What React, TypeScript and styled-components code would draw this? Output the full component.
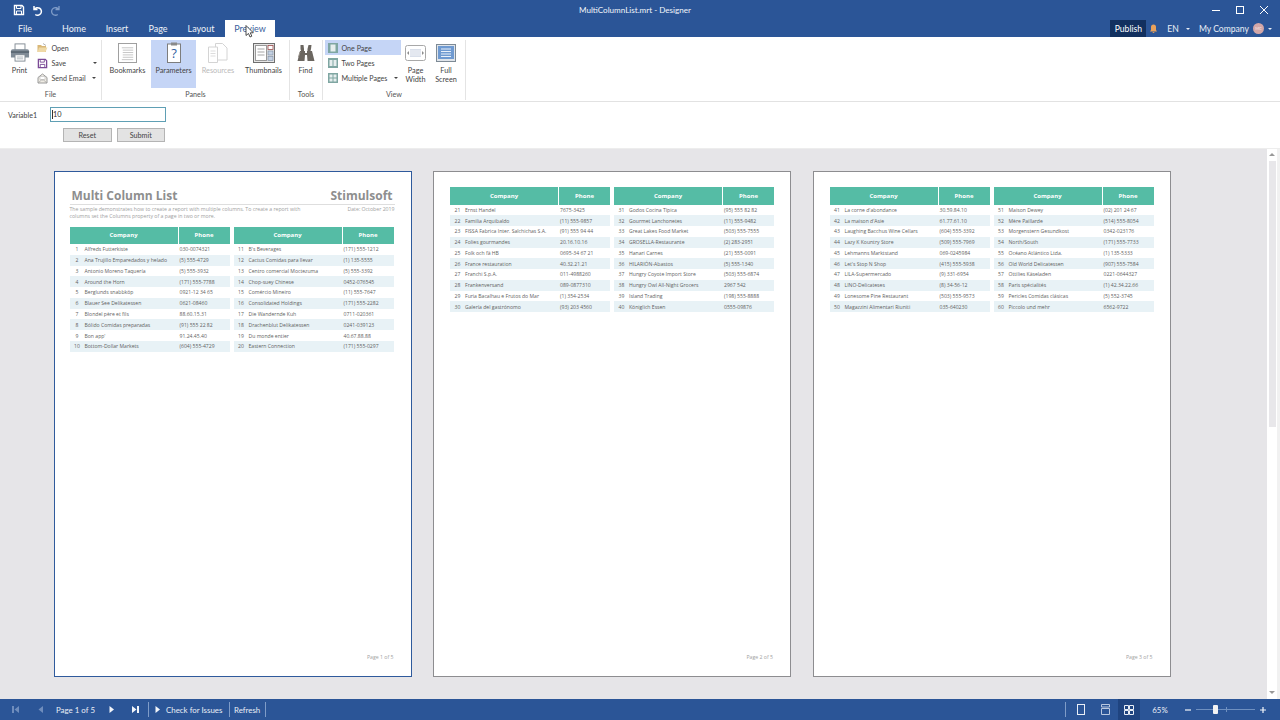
import React from 'react';
import styled, { createGlobalStyle } from 'styled-components';

const GlobalStyle = createGlobalStyle`
  html, body {
    margin: 0;
    padding: 0;
    background: #fff;
  }
  * {
    box-sizing: border-box;
  }
  svg {
    flex: none;
  }
`;

const BLUE = '#2b5597';
const UI_FONT = 'Lato, "Open Sans", sans-serif';
const REPORT_FONT = '"Open Sans", "Noto Sans", sans-serif';

const Window = styled.div`
  width: 1280px;
  height: 720px;
  display: flex;
  flex-direction: column;
  overflow: hidden;
  font-family: ${UI_FONT};
  font-size: 7.2px;
  color: #444;
`;

const TitleBar = styled.header`
  height: 37px;
  background: ${BLUE};
  color: #fff;
  display: flex;
  flex-direction: column;
  flex: none;
`;

const TitleRow = styled.div`
  height: 20px;
  display: flex;
  align-items: center;
  padding-left: 13px;
  position: relative;
`;

const QuickIcon = styled.span`
  width: 12px;
  height: 12px;
  margin-right: 6px;
  display: flex;
  align-items: center;
  justify-content: center;
`;

const DocTitle = styled.div`
  margin-left: 511px;
  width: 114px;
  font-size: 8.1px;
  white-space: nowrap;
  text-align: center;
  color: #f2f5fa;
`;

const WindowButtons = styled.div`
  margin-left: auto;
  display: flex;
  padding-right: 4px;
`;

const WindowButton = styled.span`
  width: 24px;
  height: 20px;
  display: flex;
  align-items: center;
  justify-content: center;
`;

const TabRow = styled.div`
  height: 17px;
  display: flex;
  align-items: stretch;
  padding-left: 8px;
`;

const Tab = styled.div<{ $active?: boolean; $width: number; $left?: number }>`
  position: relative;
  width: ${(p) => p.$width}px;
  margin-left: ${(p) => p.$left ?? 0}px;
  display: flex;
  align-items: center;
  justify-content: center;
  font-size: 9px;
  background: ${(p) => (p.$active ? '#fff' : 'transparent')};
  color: ${(p) => (p.$active ? '#3b5f9c' : '#eef2f8')};
`;

const Cursor = styled.svg`
  position: absolute;
  left: 20px;
  top: 5px;
`;

const AccountArea = styled.div`
  margin-left: auto;
  display: flex;
  align-items: center;
  padding-right: 8px;
`;

const PublishButton = styled.div`
  width: 36px;
  height: 17px;
  margin-right: 3px;
  background: #12305f;
  display: flex;
  align-items: center;
  justify-content: center;
  font-size: 8.6px;
`;

const AccountText = styled.span<{ $left?: number }>`
  margin-left: ${(p) => p.$left ?? 0}px;
  font-size: 8.6px;
  white-space: nowrap;
  color: #e9eef6;
`;

const Avatar = styled.span`
  width: 11px;
  height: 11px;
  margin-left: 4px;
  border-radius: 50%;
  background: #d3a7a8;
  color: #f4e8e8;
  font-size: 4px;
  display: flex;
  align-items: center;
  justify-content: center;
`;

const Caret = styled.span<{ $color?: string; $left?: number }>`
  display: inline-block;
  margin-left: ${(p) => p.$left ?? 5}px;
  border-left: 2px solid transparent;
  border-right: 2px solid transparent;
  border-top: 2px solid ${(p) => p.$color ?? '#444'};
`;

const Ribbon = styled.section`
  height: 65px;
  flex: none;
  display: flex;
  background: #fff;
  border-bottom: 1px solid #e2e2e2;
`;

const RibbonGroup = styled.div<{ $width: number }>`
  width: ${(p) => p.$width}px;
  flex: none;
  display: flex;
  flex-direction: column;
  border-right: 1px solid #e4e4e4;
  margin: 3px 0 1px;
`;

const GroupBody = styled.div<{ $left?: number }>`
  height: 48px;
  flex: none;
  padding-left: ${(p) => p.$left ?? 0}px;
  display: flex;
`;

const GroupLabel = styled.div`
  flex: 1;
  display: flex;
  align-items: center;
  justify-content: center;
  font-size: 7.2px;
  color: #555;
`;

const LargeButton = styled.div<{ $width: number; $active?: boolean; $off?: boolean }>`
  width: ${(p) => p.$width}px;
  flex: none;
  padding-top: 2px;
  display: flex;
  flex-direction: column;
  align-items: center;
  background: ${(p) => (p.$active ? '#c5d5f6' : 'transparent')};
  color: ${(p) => (p.$off ? '#b9b9b9' : '#444')};
`;

const LargeIcon = styled.span`
  height: 21px;
  margin-bottom: 1px;
  display: flex;
  align-items: center;
  justify-content: center;
`;

const LargeLabel = styled.span`
  font-size: 7.3px;
  line-height: 9px;
  text-align: center;
  margin-top: 2px;
`;

const SmallColumn = styled.div<{ $width: number; $left?: number }>`
  width: ${(p) => p.$width}px;
  margin-left: ${(p) => p.$left ?? 0}px;
  flex: none;
  display: flex;
  flex-direction: column;
`;

const SmallButton = styled.div<{ $active?: boolean }>`
  height: 15px;
  padding: 1px 0 0 3px;
  display: flex;
  align-items: center;
  gap: 3.5px;
  white-space: nowrap;
  font-size: 7.1px;
  background: ${(p) => (p.$active ? '#c5d5f6' : 'transparent')};
`;

const ParamPanel = styled.section`
  height: 47px;
  flex: none;
  background: #fff;
  padding: 5px 0 0 8px;
  display: flex;
  flex-direction: column;
  border-bottom: 1px solid #ededed;
`;

const ParamRow = styled.div`
  display: flex;
  align-items: center;
`;

const ParamLabel = styled.label`
  width: 42px;
  padding-top: 1px;
  font-size: 7.1px;
  color: #444;
`;

const ParamInput = styled.div`
  width: 116px;
  height: 15px;
  border: 1px solid #5f9fb4;
  padding-left: 1px;
  display: flex;
  align-items: center;
  font-size: 7.4px;
  color: #333;
`;

const InputCaret = styled.span`
  width: 1px;
  height: 9px;
  background: #333;
`;

const ParamButtons = styled.div`
  display: flex;
  gap: 5px;
  margin: 6px 0 0 55px;
`;

const ParamButton = styled.div`
  width: 48.5px;
  height: 14px;
  background: #e3e3e3;
  border: 1px solid #b4b4b4;
  display: flex;
  align-items: center;
  justify-content: center;
  font-size: 7.2px;
  color: #444;
`;

const Viewer = styled.main`
  flex: 1;
  min-height: 0;
  display: flex;
  background: #e6e5e8;
`;

const PageArea = styled.div`
  flex: 1;
  padding: 22px 0 0 53.5px;
  display: flex;
  gap: 21.5px;
  align-items: flex-start;
`;

const ScrollBar = styled.div`
  width: 13px;
  flex: none;
  background: #fff;
  border-right: 3px solid #f1f1f1;
  padding: 4px 2px 5px;
  display: flex;
  flex-direction: column;
  align-items: center;
`;

const ScrollArrow = styled.span<{ $down?: boolean }>`
  border-left: 3px solid transparent;
  border-right: 3px solid transparent;
  border-bottom: ${(p) => (p.$down ? '0' : '3px solid #999')};
  border-top: ${(p) => (p.$down ? '3px solid #999' : '0')};
  margin-top: ${(p) => (p.$down ? 'auto' : '0')};
`;

const ScrollThumb = styled.span`
  width: 7px;
  height: 266px;
  margin-top: 5px;
  background: #e8e7ea;
`;

const Page = styled.article<{ $current?: boolean }>`
  width: 358px;
  height: 506px;
  flex: none;
  background: #fff;
  border: ${(p) => (p.$current ? `1.5px solid #2f5a9c` : '1px solid #8d8d90')};
  padding: ${(p) => (p.$current ? '15px 16px 15px 15px' : '15px 16px 15px 16px')};
  font-family: ${REPORT_FONT};
  display: flex;
  flex-direction: column;
`;

const ReportHead = styled.div`
  height: 39.5px;
  display: flex;
  flex-direction: column;
  color: #9a9a9a;
`;

const ReportTitleRow = styled.div`
  display: flex;
  justify-content: space-between;
  align-items: center;
  padding: 0 2px 0 2px;
  height: 18px;
  font-size: 12px;
  font-weight: 700;
  color: #8e8e8e;
  border-bottom: 1.5px solid #dedede;
`;

const ReportInfo = styled.div`
  display: flex;
  justify-content: space-between;
  font-size: 5.2px;
  line-height: 7px;
  padding-top: 1px;
  color: #a0a0a0;
`;

const ReportInfoText = styled.div`
  white-space: nowrap;
`;

const Columns = styled.div`
  display: flex;
  gap: 4px;
`;

const Table = styled.div`
  width: 160px;
`;

const HeadRow = styled.div`
  height: 17.5px;
  display: grid;
  grid-template-columns: 108px 51px;
  gap: 1px;
`;

const HeadCell = styled.div`
  background: #55bca5;
  color: #fff;
  font-size: 6px;
  font-weight: 700;
  display: flex;
  align-items: center;
  justify-content: center;
`;

const Row = styled.div<{ $striped: boolean }>`
  height: 10.78px;
  display: grid;
  grid-template-columns: 15px 95px 50px;
  align-items: center;
  font-size: 5.1px;
  color: #5f5f5f;
  white-space: nowrap;
  background: ${(p) => (p.$striped ? '#e8f2f6' : '#fff')};
`;

const RowNumber = styled.span`
  text-align: center;
`;

const PageFooter = styled.div`
  margin-top: auto;
  padding-right: 1px;
  text-align: right;
  font-size: 5.2px;
  color: #a2a2a2;
`;

const StatusBar = styled.footer`
  height: 21px;
  flex: none;
  background: ${BLUE};
  color: #e9eef6;
  display: flex;
  align-items: center;
  font-size: 7.9px;
`;

const StatusIcon = styled.span<{ $width: number; $active?: boolean; $left?: number; $right?: number }>`
  width: ${(p) => p.$width}px;
  height: 21px;
  margin-left: ${(p) => p.$left ?? 0}px;
  margin-right: ${(p) => p.$right ?? 0}px;
  flex: none;
  display: flex;
  align-items: center;
  justify-content: center;
  background: ${(p) => (p.$active ? '#1f4480' : 'transparent')};
`;

const StatusText = styled.span<{ $width: number; $left?: number; $center?: boolean }>`
  width: ${(p) => p.$width}px;
  margin-left: ${(p) => p.$left ?? 0}px;
  text-align: ${(p) => (p.$center ? 'center' : 'left')};
  flex: none;
  white-space: nowrap;
`;

const StatusDivider = styled.span<{ $left: number; $right: number }>`
  width: 1px;
  height: 15px;
  flex: none;
  margin: 0 ${(p) => p.$right}px 0 ${(p) => p.$left}px;
  background: #7f9cc8;
`;

const StatusRight = styled.div`
  margin-left: auto;
  display: flex;
  align-items: center;
  height: 21px;
`;

const Slider = styled.div`
  position: relative;
  width: 59px;
  height: 1px;
  margin: 0 5px;
  background: #6f90c0;
`;

const SliderThumb = styled.span`
  position: absolute;
  left: 16.5px;
  top: -4px;
  width: 5px;
  height: 9px;
  border-radius: 1px;
  background: #f3f3f3;
`;

const SliderTick = styled.span`
  position: absolute;
  left: 30px;
  top: -2px;
  width: 1px;
  height: 5px;
  background: #6f90c0;
`;

type Company = [string, string];

const page1Left: Company[] = [
  ['Alfreds Futterkiste', '030-0074321'],
  ['Ana Trujillo Emparedados y helado', '(5) 555-4729'],
  ['Antonio Moreno Taquería', '(5) 555-3932'],
  ['Around the Horn', '(171) 555-7788'],
  ['Berglunds snabbköp', '0921-12 34 65'],
  ['Blauer See Delikatessen', '0621-08460'],
  ['Blondel père et fils', '88.60.15.31'],
  ['Bólido Comidas preparadas', '(91) 555 22 82'],
  ["Bon app'", '91.24.45.40'],
  ['Bottom-Dollar Markets', '(604) 555-4729'],
];

const page1Right: Company[] = [
  ["B's Beverages", '(171) 555-1212'],
  ['Cactus Comidas para llevar', '(1) 135-5555'],
  ['Centro comercial Moctezuma', '(5) 555-3392'],
  ['Chop-suey Chinese', '0452-076545'],
  ['Comércio Mineiro', '(11) 555-7647'],
  ['Consolidated Holdings', '(171) 555-2282'],
  ['Die Wandernde Kuh', '0711-020361'],
  ['Drachenblut Delikatessen', '0241-039123'],
  ['Du monde entier', '40.67.88.88'],
  ['Eastern Connection', '(171) 555-0297'],
];

const page2Left: Company[] = [
  ['Ernst Handel', '7675-3425'],
  ['Familia Arquibaldo', '(11) 555-9857'],
  ['FISSA Fabrica Inter. Salchichas S.A.', '(91) 555 94 44'],
  ['Folies gourmandes', '20.16.10.16'],
  ['Folk och fä HB', '0695-34 67 21'],
  ['France restauration', '40.32.21.21'],
  ['Franchi S.p.A.', '011-4988260'],
  ['Frankenversand', '089-0877310'],
  ['Furia Bacalhau e Frutos do Mar', '(1) 354-2534'],
  ['Galería del gastrónomo', '(93) 203 4560'],
];

const page2Right: Company[] = [
  ['Godos Cocina Típica', '(95) 555 82 82'],
  ['Gourmet Lanchonetes', '(11) 555-9482'],
  ['Great Lakes Food Market', '(503) 555-7555'],
  ['GROSELLA-Restaurante', '(2) 283-2951'],
  ['Hanari Carnes', '(21) 555-0091'],
  ['HILARIÓN-Abastos', '(5) 555-1340'],
  ['Hungry Coyote Import Store', '(503) 555-6874'],
  ['Hungry Owl All-Night Grocers', '2967 542'],
  ['Island Trading', '(198) 555-8888'],
  ['Königlich Essen', '0555-09876'],
];

const page3Left: Company[] = [
  ["La corne d'abondance", '30.59.84.10'],
  ["La maison d'Asie", '61.77.61.10'],
  ['Laughing Bacchus Wine Cellars', '(604) 555-3392'],
  ['Lazy K Kountry Store', '(509) 555-7969'],
  ['Lehmanns Marktstand', '069-0245984'],
  ["Let's Stop N Shop", '(415) 555-5938'],
  ['LILA-Supermercado', '(9) 331-6954'],
  ['LINO-Delicateses', '(8) 34-56-12'],
  ['Lonesome Pine Restaurant', '(503) 555-9573'],
  ['Magazzini Alimentari Riuniti', '035-640230'],
];

const page3Right: Company[] = [
  ['Maison Dewey', '(02) 201 24 67'],
  ['Mère Paillarde', '(514) 555-8054'],
  ['Morgenstern Gesundkost', '0342-023176'],
  ['North/South', '(171) 555-7733'],
  ['Océano Atlántico Ltda.', '(1) 135-5333'],
  ['Old World Delicatessen', '(907) 555-7584'],
  ['Ottilies Käseladen', '0221-0644327'],
  ['Paris spécialités', '(1) 42.34.22.66'],
  ['Pericles Comidas clásicas', '(5) 552-3745'],
  ['Piccolo und mehr', '6562-9722'],
];

const ReportTable = ({ first, rows }: { first: number; rows: Company[] }) => (
  <Table>
    <HeadRow>
      <HeadCell>Company</HeadCell>
      <HeadCell>Phone</HeadCell>
    </HeadRow>
    {rows.map(([name, phone], i) => (
      <Row key={name} $striped={i % 2 === 1}>
        <RowNumber>{first + i}</RowNumber>
        <span>{name}</span>
        <span>{phone}</span>
      </Row>
    ))}
  </Table>
);

const SaveIcon = ({ color = '#fff', size = 12 }: { color?: string; size?: number }) => (
  <svg width={size} height={size} viewBox="0 0 12 12" fill="none">
    <path d="M1.5 1.5h7.5l1.5 1.5v7.5h-9z" stroke={color} strokeWidth="1.4" />
    <path d="M3.5 1.5v3h4.5v-3M3.5 10.5v-3.5h5v3.5" stroke={color} strokeWidth="1" />
  </svg>
);

const PrintIcon = () => (
  <svg width="20" height="19" viewBox="0 0 22 21">
    <rect x="5.5" y="1" width="11" height="7" fill="#fff" stroke="#7d8790" />
    <path d="M1 9a2 2 0 0 1 2-2h16a2 2 0 0 1 2 2v7h-20z" fill="#7f8b96" />
    <rect x="1" y="9" width="20" height="2" fill="#5b6873" />
    <rect x="5.5" y="13" width="11" height="7" fill="#fff" stroke="#7d8790" />
    <path d="M7.5 15.5h7M7.5 17.5h7" stroke="#aab2b8" />
  </svg>
);

const OpenIcon = () => (
  <svg width="11" height="10" viewBox="0 0 11 10">
    <path d="M0.5 2h3.5l1 1h4v6h-8.500z" fill="#d9b777" />
    <path d="M2 4.500h8.500l-2 4.500h-8z" fill="#efd9a6" />
    <path d="M6 .5l3 2" stroke="#b5b5b5" />
  </svg>
);

const SendIcon = () => (
  <svg width="11" height="11" viewBox="0 0 11 11">
    <path d="M1 4.500l4.500-3.500 4.500 3.500v5.500h-9z" fill="#efece4" stroke="#9a9a9a" />
    <path d="M3 3.500h5v3h-5z" fill="#fff" stroke="#bbb" strokeWidth=".6" />
    <path d="M1 10l3.500-3h2l3.500 3" fill="none" stroke="#a0a0a0" strokeWidth=".7" />
  </svg>
);

const BookmarksIcon = () => (
  <svg width="19" height="20" viewBox="0 0 20 21">
    <rect x=".5" y=".5" width="19" height="20" fill="#fff" stroke="#9c9c9c" />
    <path d="M4 5h12M5 7.500h11M5 10h11M5 12.500h11M5 15h11M4 17.500h12" stroke="#b5b5b5" strokeWidth=".8" />
  </svg>
);

const ParametersIcon = () => (
  <svg width="14" height="21" viewBox="0 0 14 21">
    <rect x=".5" y="2" width="13" height="18.500" fill="#fff" stroke="#7d7d7d" />
    <rect x="4" y=".5" width="6" height="3" fill="#8a8a8a" />
    <text x="7" y="16" fontSize="13" textAnchor="middle" fill="#33609f" fontFamily="Open Sans, sans-serif">?</text>
  </svg>
);

const ResourcesIcon = () => (
  <svg width="20" height="20" viewBox="0 0 20 20" fill="#fff" stroke="#d4d4d4">
    <path d="M7.500 .5h7l4.500 4.500v12h-11.500z" />
    <path d="M.5 4h9v15.500h-9z" />
    <path d="M2.500 8h5M2.500 10.500h5M2.500 13h5" strokeWidth=".8" />
  </svg>
);

const ThumbnailsIcon = () => (
  <svg width="22" height="20" viewBox="0 0 22 20">
    <rect x=".5" y=".5" width="21" height="19" fill="#e5e5e5" stroke="#6f6f6f" />
    <rect x="2.500" y="2.500" width="11" height="15" fill="#fff" stroke="#9a9a9a" />
    <path d="M4.500 6h7M4.500 9h7M4.500 12h7" stroke="#a5a5a5" />
    <rect x="15" y="2.500" width="5" height="4" fill="#fff" stroke="#9b4a4a" strokeWidth=".8" />
    <rect x="15" y="8" width="5" height="4" fill="#c3d0e2" stroke="#7b8ba0" strokeWidth=".6" />
    <rect x="15" y="13.500" width="5" height="4" fill="#c3d0e2" stroke="#7b8ba0" strokeWidth=".6" />
  </svg>
);

const FindIcon = () => (
  <svg width="18" height="18" viewBox="0 0 18 18" fill="#6b6660">
    <path d="M3.500 1h3l.5 4v2h-3l-.5-2z" />
    <path d="M11.500 1h3l-.5 4-.5 2h-3v-2z" />
    <path d="M3 7h5v2h2v-2h5l2.500 10h-7l-.5-6h-2l-.5 6h-7z" />
    <path d="M1.500 13l1.500-5" stroke="#9b958d" />
  </svg>
);

const ViewSmallIcon = ({ kind }: { kind: 'one' | 'two' | 'many' }) => (
  <svg width="10" height="10" viewBox="0 0 10 10">
    <rect width="10" height="10" fill="#7fa6a2" />
    {kind === 'one' && <rect x="2.500" y="1.500" width="5" height="7" fill="#e6eeee" />}
    {kind === 'two' && (
      <>
        <rect x="1.500" y="2" width="3" height="6" fill="#e6eeee" />
        <rect x="5.500" y="2" width="3" height="6" fill="#e6eeee" />
      </>
    )}
    {kind === 'many' && (
      <>
        <rect x="1.500" y="1.500" width="3" height="3" fill="#e6eeee" />
        <rect x="5.500" y="1.500" width="3" height="3" fill="#e6eeee" />
        <rect x="1.500" y="5.500" width="3" height="3" fill="#e6eeee" />
        <rect x="5.500" y="5.500" width="3" height="3" fill="#e6eeee" />
      </>
    )}
  </svg>
);

const PageWidthIcon = () => (
  <svg width="21" height="18" viewBox="0 0 21 18">
    <rect x=".5" y="1.500" width="20" height="15" rx="2" fill="#fff" stroke="#a8a8a8" />
    <rect x="5" y="5" width="11" height="8" fill="#d9dfea" />
    <path d="M5 7h11M5 9h11M5 11h11" stroke="#fff" strokeWidth=".6" />
    <path d="M4 7l-2 2 2 2zM17 7l2 2-2 2z" fill="#8d8d8d" />
  </svg>
);

const FullScreenIcon = () => (
  <svg width="20" height="18" viewBox="0 0 20 18">
    <rect x=".5" y=".5" width="19" height="17" fill="#dfe4ea" stroke="#7d8a95" />
    <rect x="2" y="2" width="16" height="13" fill="#6f9ad1" />
    <path d="M5 5h10M5 7.500h10M5 10h10M5 12.500h10" stroke="#e9f0fa" />
  </svg>
);

const NavIcon = ({ kind, dim }: { kind: 'first' | 'prev' | 'next' | 'last'; dim?: boolean }) => {
  const color = dim ? '#6f8dbd' : '#f2f5fa';
  return (
    <svg width="9" height="9" viewBox="0 0 9 9" fill={color}>
      {kind === 'first' && <path d="M1 1h2v7h-2zM8 1v7l-4.500-3.500z" />}
      {kind === 'prev' && <path d="M7 1v7l-4.500-3.500z" />}
      {kind === 'next' && <path d="M2.500 1v7l4.500-3.500z" />}
      {kind === 'last' && <path d="M1 1v7l4.500-3.500zM6 1h2v7h-2z" />}
    </svg>
  );
};

const reportPages = [
  { left: page1Left, right: page1Right, first: 1 },
  { left: page2Left, right: page2Right, first: 21 },
  { left: page3Left, right: page3Right, first: 41 },
];

const App = () => {
  return (
    <Window>
      <GlobalStyle />
      <TitleBar>
        <TitleRow>
          <QuickIcon>
            <SaveIcon />
          </QuickIcon>
          <QuickIcon>
            <svg width="11" height="11" viewBox="0 0 11 11" fill="none" stroke="#fff" strokeWidth="1.500">
              <path d="M2 1v3.500h3.500M2.300 4.500a3.800 3.800 0 1 1 1 5" />
            </svg>
          </QuickIcon>
          <QuickIcon>
            <svg width="11" height="11" viewBox="0 0 11 11" fill="none" stroke="#7f9cc8" strokeWidth="1.300">
              <path d="M9 1v3.500h-3.500M8.700 4.500a3.800 3.800 0 1 0-1 5" />
            </svg>
          </QuickIcon>
          <DocTitle>MultiColumnList.mrt - Designer</DocTitle>
          <WindowButtons>
            <WindowButton>
              <svg width="10" height="10" viewBox="0 0 10 10" stroke="#fff">
                <path d="M1 5.500h8" />
              </svg>
            </WindowButton>
            <WindowButton>
              <svg width="10" height="10" viewBox="0 0 10 10" fill="none" stroke="#fff">
                <rect x="1.500" y="1.500" width="7" height="7" />
              </svg>
            </WindowButton>
            <WindowButton>
              <svg width="10" height="10" viewBox="0 0 10 10" stroke="#fff">
                <path d="M1 1l8 8M9 1l-8 8" />
              </svg>
            </WindowButton>
          </WindowButtons>
        </TitleRow>
        <TabRow>
          <Tab $width={34}>File</Tab>
          <Tab $width={44} $left={10}>Home</Tab>
          <Tab $width={42}>Insert</Tab>
          <Tab $width={40}>Page</Tab>
          <Tab $width={46}>Layout</Tab>
          <Tab $width={50} $left={1} $active>
            Preview
            <Cursor width="9" height="13" viewBox="0 0 9 13">
              <path d="M1 .5v10l2.500-2 1.500 3.500 1.800-.8-1.500-3.400h3z" fill="#fff" stroke="#222" strokeWidth=".8" />
            </Cursor>
          </Tab>
          <AccountArea>
            <PublishButton>Publish</PublishButton>
            <svg width="9" height="9" viewBox="0 0 9 9" fill="#e9a15b">
              <path d="M4.500 .5a2.500 2.500 0 0 1 2.500 2.500v3l1 1.500h-7l1-1.500v-3a2.500 2.500 0 0 1 2.500-2.500zM3.500 8h2a1 1 0 0 1-2 0z" />
            </svg>
            <AccountText $left={9}>EN</AccountText>
            <Caret $color="#e9eef6" $left={7} />
            <AccountText $left={9}>My Company</AccountText>
            <Avatar>MC</Avatar>
            <Caret $color="#e9eef6" $left={4} />
          </AccountArea>
        </TabRow>
      </TitleBar>

      <Ribbon>
        <RibbonGroup $width={102}>
          <GroupBody $left={7}>
            <LargeButton $width={25}>
              <LargeIcon>
                <PrintIcon />
              </LargeIcon>
              <LargeLabel>Print</LargeLabel>
            </LargeButton>
            <SmallColumn $width={64} $left={2}>
              <SmallButton>
                <OpenIcon />
                Open
              </SmallButton>
              <SmallButton>
                <SaveIcon color="#7b4a96" size={11} />
                Save
                <Caret $left={23} />
              </SmallButton>
              <SmallButton>
                <SendIcon />
                Send Email
                <Caret $left={3} />
              </SmallButton>
            </SmallColumn>
          </GroupBody>
          <GroupLabel>File</GroupLabel>
        </RibbonGroup>

        <RibbonGroup $width={188}>
          <GroupBody $left={2}>
            <LargeButton $width={47}>
              <LargeIcon>
                <BookmarksIcon />
              </LargeIcon>
              <LargeLabel>Bookmarks</LargeLabel>
            </LargeButton>
            <LargeButton $width={45} $active>
              <LargeIcon>
                <ParametersIcon />
              </LargeIcon>
              <LargeLabel>Parameters</LargeLabel>
            </LargeButton>
            <LargeButton $width={44} $off>
              <LargeIcon>
                <ResourcesIcon />
              </LargeIcon>
              <LargeLabel>Resources</LargeLabel>
            </LargeButton>
            <LargeButton $width={47}>
              <LargeIcon>
                <ThumbnailsIcon />
              </LargeIcon>
              <LargeLabel>Thumbnails</LargeLabel>
            </LargeButton>
          </GroupBody>
          <GroupLabel>Panels</GroupLabel>
        </RibbonGroup>

        <RibbonGroup $width={33}>
          <GroupBody>
            <LargeButton $width={31}>
              <LargeIcon>
                <FindIcon />
              </LargeIcon>
              <LargeLabel>Find</LargeLabel>
            </LargeButton>
          </GroupBody>
          <GroupLabel>Tools</GroupLabel>
        </RibbonGroup>

        <RibbonGroup $width={143}>
          <GroupBody $left={2}>
            <SmallColumn $width={76}>
              <SmallButton $active>
                <ViewSmallIcon kind="one" />
                One Page
              </SmallButton>
              <SmallButton>
                <ViewSmallIcon kind="two" />
                Two Pages
              </SmallButton>
              <SmallButton>
                <ViewSmallIcon kind="many" />
                Multiple Pages
                <Caret $left={3} />
              </SmallButton>
            </SmallColumn>
            <LargeButton $width={29}>
              <LargeIcon>
                <PageWidthIcon />
              </LargeIcon>
              <LargeLabel>
                Page
                <br />
                Width
              </LargeLabel>
            </LargeButton>
            <LargeButton $width={32}>
              <LargeIcon>
                <FullScreenIcon />
              </LargeIcon>
              <LargeLabel>
                Full
                <br />
                Screen
              </LargeLabel>
            </LargeButton>
          </GroupBody>
          <GroupLabel>View</GroupLabel>
        </RibbonGroup>
      </Ribbon>

      <ParamPanel>
        <ParamRow>
          <ParamLabel>Variable1</ParamLabel>
          <ParamInput>
            <InputCaret />
            10
          </ParamInput>
        </ParamRow>
        <ParamButtons>
          <ParamButton>Reset</ParamButton>
          <ParamButton>Submit</ParamButton>
        </ParamButtons>
      </ParamPanel>

      <Viewer>
        <PageArea>
          {reportPages.map((page, i) => (
            <Page key={page.first} $current={i === 0}>
              {i === 0 && (
                <ReportHead>
                  <ReportTitleRow>
                    <span>Multi Column List</span>
                    <span>Stimulsoft</span>
                  </ReportTitleRow>
                  <ReportInfo>
                    <ReportInfoText>
                      The sample demonstrates how to create a report with multiple columns. To create a report with
                      <br />
                      columns set the Columns property of a page in two or more.
                    </ReportInfoText>
                    <span>Date: October 2019</span>
                  </ReportInfo>
                </ReportHead>
              )}
              <Columns>
                <ReportTable first={page.first} rows={page.left} />
                <ReportTable first={page.first + 10} rows={page.right} />
              </Columns>
              <PageFooter>Page {i + 1} of 5</PageFooter>
            </Page>
          ))}
        </PageArea>
        <ScrollBar>
          <ScrollArrow />
          <ScrollThumb />
          <ScrollArrow $down />
        </ScrollBar>
      </Viewer>

      <StatusBar>
        <StatusIcon $width={31}>
          <NavIcon kind="first" dim />
        </StatusIcon>
        <StatusIcon $width={18}>
          <NavIcon kind="prev" dim />
        </StatusIcon>
        <StatusText $width={51} $left={7}>
          Page 1 of 5
        </StatusText>
        <StatusIcon $width={9}>
          <NavIcon kind="next" />
        </StatusIcon>
        <StatusIcon $width={39}>
          <NavIcon kind="last" />
        </StatusIcon>
        <StatusDivider $left={-7} $right={4} />
        <StatusIcon $width={9}>
          <NavIcon kind="next" />
        </StatusIcon>
        <StatusText $width={58} $left={4}>
          Check for Issues
        </StatusText>
        <StatusDivider $left={5} $right={4} />
        <StatusText $width={26}>Refresh</StatusText>
        <StatusDivider $left={5} $right={0} />
        <StatusRight>
          <StatusDivider $left={0} $right={3} />
          <StatusIcon $width={24}>
            <svg width="8" height="11" viewBox="0 0 8 11" fill="none" stroke="#e9eef6">
              <rect x=".5" y=".5" width="7" height="10" />
            </svg>
          </StatusIcon>
          <StatusIcon $width={25}>
            <svg width="9" height="11" viewBox="0 0 9 11" fill="none" stroke="#b9c8e0">
              <path d="M.5 .5h8v2.500h-8zM.5 4.500h8v6h-8z" />
            </svg>
          </StatusIcon>
          <StatusIcon $width={22} $active>
            <svg width="10" height="10" viewBox="0 0 10 10" fill="none" stroke="#e9eef6">
              <path d="M.5 .5h4v4h-4zM5.500 .5h4v4h-4zM.5 5.500h4v4h-4zM5.500 5.500h4v4h-4z" />
            </svg>
          </StatusIcon>
          <StatusText $width={30} $left={5} $center>
            65%
          </StatusText>
          <StatusIcon $width={6} $left={10}>
            <svg width="6" height="6" viewBox="0 0 6 6" stroke="#f2f5fa" strokeWidth="1.200">
              <path d="M0 3h6" />
            </svg>
          </StatusIcon>
          <Slider>
            <SliderThumb />
            <SliderTick />
          </Slider>
          <StatusIcon $width={6} $right={14}>
            <svg width="6" height="6" viewBox="0 0 6 6" stroke="#f2f5fa" strokeWidth="1.200">
              <path d="M0 3h6M3 0v6" />
            </svg>
          </StatusIcon>
        </StatusRight>
      </StatusBar>
    </Window>
  );
};

export default App;
